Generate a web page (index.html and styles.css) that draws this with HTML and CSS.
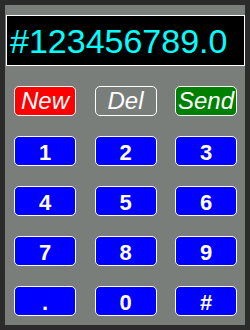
FILE: index.html
```html
<!DOCTYPE html>
<html lang="en">
<head>
    <meta charset="UTF-8">
    <title>Dialer</title>
    <link rel="stylesheet" href="styles.css">
</head>
<body>
    <div class="panel">
        <div class="display">#123456789.0</div>
        <div class="keys">
            <button class="key key-new">New</button>
            <button class="key key-del">Del</button>
            <button class="key key-send">Send</button>
            <button class="key num">1</button>
            <button class="key num">2</button>
            <button class="key num">3</button>
            <button class="key num">4</button>
            <button class="key num">5</button>
            <button class="key num">6</button>
            <button class="key num">7</button>
            <button class="key num">8</button>
            <button class="key num">9</button>
            <button class="key num">.</button>
            <button class="key num">0</button>
            <button class="key num">#</button>
        </div>
    </div>
</body>
</html>
```

FILE: styles.css
```css
*{
    padding: 0;
    margin: 0;
    box-sizing: border-box;
}
body{
    background-color: #2b2b2b;
    font-family: "Liberation Sans", Arial, sans-serif;
    padding: 5px;
}
.panel{
    width: 240px;
    height: 320px;
    background-color: #7a7e7a;
    padding: 10px 1px 0 1px;
}
.display{
    width: 239px;
    height: 51px;
    border: 1px solid #fff;
    background-color: #000;
    color: #00ffff;
    font-size: 34px;
    line-height: 49px;
    padding: 1px 0 0 3px;
    white-space: nowrap;
}
.keys{
    display: grid;
    grid-template-columns: repeat(3, 62px);
    grid-auto-rows: 30px;
    column-gap: 18.5px;
    row-gap: 20px;
    margin: 20px 0 0 8px;
}
.key{
    border: 1px solid #fff;
    border-radius: 5px;
    color: #fff;
    font-family: "Liberation Sans", Arial, sans-serif;
    background-color: #0000ff;
    line-height: 28px;
}
.key-new, .key-del, .key-send{
    font-size: 24px;
    font-style: italic;
    line-height: 26px;
}
.key-new{
    background-color: #ff0000;
}
.key-del{
    background-color: transparent;
}
.key-send{
    background-color: #008000;
}
.num{
    font-size: 22px;
    font-weight: bold;
    padding-top: 2px;
}
```
